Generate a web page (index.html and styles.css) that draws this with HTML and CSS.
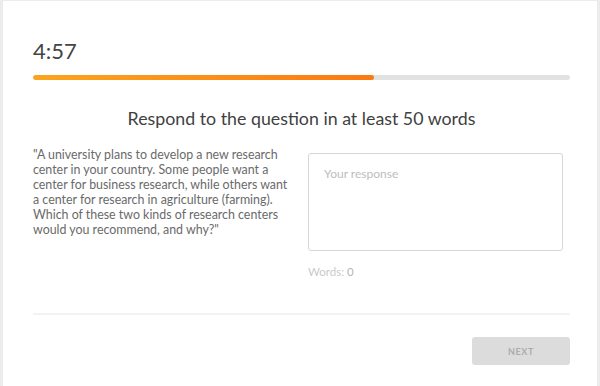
FILE: index.html
```html
<!DOCTYPE html>
<html lang="en">
<head>
  <meta charset="UTF-8" />
  <meta name="viewport" content="width=device-width, initial-scale=1.0"/>
  <title>Writing Task</title>
  <link rel="stylesheet" href="styles.css">
</head>
<body>
  <div class="card">
    <div class="timer" id="timer">4:57</div>
    <div class="progress">
      <div class="progress-fill" style="width: 63.5%"></div>
    </div>

    <h2 class="prompt">Respond to the question in at least 50 words</h2>

    <div class="task">
      <p class="question">"A university plans to develop a new research center in your country. Some people want a center for business research, while others want a center for research in agriculture (farming). Which of these two kinds of research centers would you recommend, and why?"</p>
      <div class="answer">
        <textarea id="response" placeholder="Your response"></textarea>
        <div class="words">Words: <span id="wordCount">0</span></div>
      </div>
    </div>

    <hr class="divider">

    <div class="footer">
      <button id="nextBtn" class="next" disabled>NEXT</button>
    </div>
  </div>

  <script>
    const response = document.getElementById("response");
    const wordCount = document.getElementById("wordCount");
    const nextBtn = document.getElementById("nextBtn");

    response.addEventListener("input", () => {
      const words = response.value.trim().split(/\s+/).filter(w => w !== "");
      wordCount.innerText = words.length;
      nextBtn.disabled = words.length < 50;
    });
  </script>
</body>
</html>
```

FILE: styles.css
```css
html, body {
  height: 100%;
}

body {
  margin: 0;
  background-color: #ececec;
  font-family: Lato, 'Open Sans', sans-serif;
  box-sizing: border-box;
  padding: 1px 3px 0 3px;
}

.card {
  background-color: #fff;
  height: 100%;
  box-sizing: border-box;
  padding: 36px 27px 0 30px;
}

.timer {
  font-size: 22px;
  line-height: 28px;
  color: #444;
}

.progress {
  margin-top: 10px;
  height: 5px;
  background-color: #e2e2e2;
  border-radius: 3px;
  overflow: hidden;
}

.progress-fill {
  height: 100%;
  border-radius: 3px;
  background: linear-gradient(to right, #fba51e, #fb7a12);
}

.prompt {
  margin: 28px 0 0 0;
  text-align: center;
  font-size: 17.8px;
  line-height: 20px;
  font-weight: normal;
  color: #3f3f3f;
}

.task {
  display: grid;
  grid-template-columns: 262px 255px;
  gap: 13px;
  margin-top: 19px;
}

.question {
  margin: 0;
  font-size: 12.4px;
  line-height: 15px;
  color: #6a6a6a;
}

.answer textarea {
  display: block;
  margin-top: 6px;
  width: 255px;
  height: 98px;
  box-sizing: border-box;
  border: 1px solid #d6d6d6;
  border-radius: 3px;
  padding: 12px 15px;
  font-family: inherit;
  font-size: 12px;
  line-height: 15px;
  color: #444;
  resize: none;
  outline: none;
}

.answer textarea::placeholder {
  color: #bdbdbd;
}

.words {
  margin-top: 13px;
  font-size: 11.5px;
  line-height: 15px;
  color: #cacaca;
}

.words span {
  color: #b5b5b5;
}

.divider {
  margin: 34px 0 0 0;
  border: none;
  height: 2px;
  background-color: #f3f3f3;
}

.footer {
  display: flex;
  justify-content: flex-end;
  margin-top: 22px;
}

.next {
  width: 98px;
  height: 28px;
  border: none;
  border-radius: 3px;
  background-color: #dcdcdc;
  color: #acacac;
  font-family: inherit;
  font-size: 9px;
  font-weight: bold;
  letter-spacing: 0.6px;
  cursor: pointer;
}
```
